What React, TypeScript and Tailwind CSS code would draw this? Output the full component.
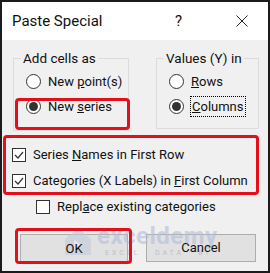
import React from 'react';

const font = { fontFamily: 'Roboto, "Noto Sans", sans-serif' };

const Radio: React.FC<{ checked?: boolean; children: React.ReactNode; focus?: boolean }> = ({ checked, children, focus }) => (
  <div className="flex items-center gap-[7px] h-[25px] whitespace-nowrap">
    <span className="w-[15px] h-[15px] shrink-0 rounded-full border border-[#333] bg-white flex items-center justify-center">
      {checked && <span className="w-[9px] h-[9px] rounded-full bg-[#333]" />}
    </span>
    <span className={focus ? 'outline outline-1 outline-dotted outline-[#000] px-px' : ''}>{children}</span>
  </div>
);

const Check: React.FC<{ checked?: boolean; children: React.ReactNode }> = ({ checked, children }) => (
  <div className="flex items-center gap-[7px] h-[26px] whitespace-nowrap">
    <span className="w-[14px] h-[14px] shrink-0 border border-[#333] bg-white flex items-center justify-center">
      {checked && (
        <svg width="10" height="8" viewBox="0 0 10 8">
          <path d="M1 4 L4 7 L9 1" fill="none" stroke="#333" strokeWidth="1.2" />
        </svg>
      )}
    </span>
    <span>{children}</span>
  </div>
);

export default function App() {
  return (
    <div className="w-[270px] h-[273px] border-2 border-[#1b1b1b] flex flex-col text-[13px] text-[#111] relative overflow-hidden" style={font}>
      {/* title bar */}
      <div className="h-[38px] bg-white flex items-center pl-[10px] pr-[20px] shrink-0">
        <span className="text-[15px] flex-1">Paste Special</span>
        <span className="text-[15px] mr-[54px]">?</span>
        <svg width="12" height="12" viewBox="0 0 12 12">
          <path d="M0.5 0.5 L11.5 11.5 M11.5 0.5 L0.5 11.5" stroke="#222" strokeWidth="1" />
        </svg>
      </div>

      <div className="flex-1 bg-[#f0f0f0] flex flex-col relative">
        <div className="flex pl-[11px] pt-[10px] gap-[27px] h-[91px]">
          <fieldset className="w-[116px] h-[81px] border border-[#dcdcdc] pl-[12px] pr-0 m-0">
            <legend className="px-[2px] ml-[-5px] leading-[17px] text-[13.5px]">Add cells as</legend>
            <div className="mt-[2px]">
              <Radio>New <u>p</u>oint(s)</Radio>
              <Radio checked>New <u>s</u>eries</Radio>
            </div>
          </fieldset>
          <fieldset className="w-[103px] h-[79px] border border-[#dcdcdc] pl-[12px] pr-0 m-0">
            <legend className="px-[2px] ml-[-5px] leading-[17px] text-[13.5px]">Values (Y) in</legend>
            <div className="mt-[2px]">
              <Radio><u>R</u>ows</Radio>
              <Radio checked focus><u>C</u>olumns</Radio>
            </div>
          </fieldset>
        </div>

        <div className="pl-[10px] mt-[11px]">
          <Check checked>Series <u>N</u>ames in First Row</Check>
          <Check checked>Categories (X Labels) in <u>F</u>irst Column</Check>
          <div className="pl-[24px]">
            <Check>Repl<u>a</u>ce existing categories</Check>
          </div>
        </div>

        <div className="flex pl-[18px] mt-[14px] gap-[18px]">
          <button className="w-[108px] h-[29px] bg-[#e1e1e1] border border-[#adadad] flex items-center justify-center">
            <span className="relative z-10">OK</span>
          </button>
          <button className="w-[110px] h-[28px] bg-[#e1e1e1] border border-[#adadad] flex items-center justify-center">
            <span className="relative z-10">Cancel</span>
          </button>
        </div>

        {/* watermark */}
        <div className="absolute left-[62px] top-[184px] flex items-center gap-[5px] pointer-events-none opacity-60">
          <svg width="28" height="30" viewBox="0 0 28 30">
            <path d="M14 2 L27 13 L27 29 L1 29 L1 13 Z" fill="#c4cbdb" />
            <path d="M10 14 L18 19 L10 24 Z" fill="#e8ebf2" />
          </svg>
          <div className="flex flex-col leading-none">
            <span className="text-[24px] font-bold text-[#b3bedb] tracking-[0.5px]">exceldemy</span>
            <span className="text-[7px] text-[#a5a9b8] tracking-[3px] mt-[2px] ml-[8px]">EXCEL · DATA · BI</span>
          </div>
        </div>
      </div>

      {/* annotation boxes */}
      <div className="absolute left-[13px] top-[96px] w-[115px] h-[32px] border-[3px] border-[#e3101c] rounded-[4px] pointer-events-none" />
      <div className="absolute left-[1px] top-[133px] w-[256px] h-[60px] border-[3px] border-[#e3101c] rounded-[4px] pointer-events-none" />
      <div className="absolute left-[13px] top-[226px] w-[117px] h-[36px] border-[3px] border-[#e3101c] rounded-[4px] pointer-events-none" />
    </div>
  );
}
